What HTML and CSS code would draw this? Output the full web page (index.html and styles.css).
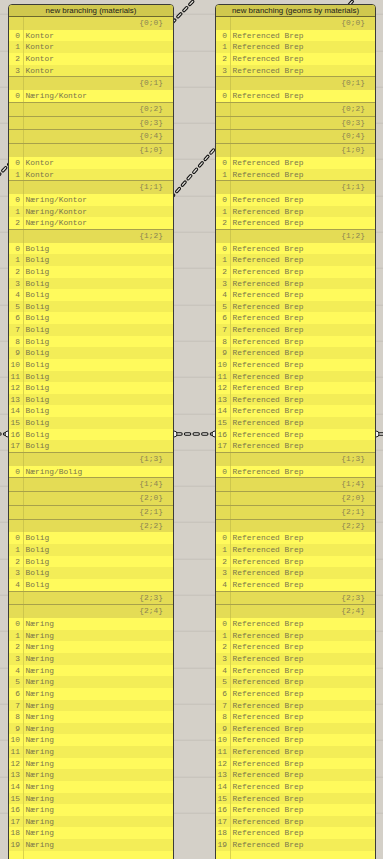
FILE: index.html
```html
<!DOCTYPE html>
<html>
<head>
<meta charset="utf-8">
<link rel="stylesheet" href="styles.css">
</head>
<body>
<div class="canvas">
  <svg class="wires" width="383" height="859" viewBox="0 0 383 859">
    <g class="wire">
      <path d="M172 23 L197 -3"/>
      <path d="M344 11 L356 -3"/>
      <path d="M-3 177 L12 161"/>
      <path d="M171 198 L218 145"/>
      <path d="M-4 434 L5 434"/>
      <path d="M177 434 L212 434"/>
      <path d="M379 434 L388 434"/>
    </g>
    <g class="wire-in">
      <path d="M172 23 L197 -3"/>
      <path d="M344 11 L356 -3"/>
      <path d="M-3 177 L12 161"/>
      <path d="M171 198 L218 145"/>
      <path d="M-4 434 L5 434"/>
      <path d="M177 434 L212 434"/>
      <path d="M379 434 L388 434"/>
    </g>
    <g class="grip">
      <circle cx="8" cy="434" r="3"/>
      <circle cx="174" cy="434" r="3"/>
      <circle cx="215" cy="434" r="3"/>
      <circle cx="376" cy="434" r="3"/>
    </g>
  </svg>

  <div class="panel panel-left">
    <div class="title">new branching (materials)</div>
    <div class="body">
      <div class="branch">
        <div class="path first"><span class="i"></span><span class="v">{0;0}</span></div>
        <div class="row"><span class="i">0</span><span class="v">Kontor</span></div>
        <div class="row"><span class="i">1</span><span class="v">Kontor</span></div>
        <div class="row"><span class="i">2</span><span class="v">Kontor</span></div>
        <div class="row"><span class="i">3</span><span class="v">Kontor</span></div>
      </div>
      <div class="branch">
        <div class="path"><span class="i"></span><span class="v">{0;1}</span></div>
        <div class="row"><span class="i">0</span><span class="v">Næring/Kontor</span></div>
      </div>
      <div class="branch"><div class="path"><span class="i"></span><span class="v">{0;2}</span></div></div>
      <div class="branch"><div class="path"><span class="i"></span><span class="v">{0;3}</span></div></div>
      <div class="branch"><div class="path"><span class="i"></span><span class="v">{0;4}</span></div></div>
      <div class="branch">
        <div class="path"><span class="i"></span><span class="v">{1;0}</span></div>
        <div class="row"><span class="i">0</span><span class="v">Kontor</span></div>
        <div class="row"><span class="i">1</span><span class="v">Kontor</span></div>
      </div>
      <div class="branch">
        <div class="path"><span class="i"></span><span class="v">{1;1}</span></div>
        <div class="row"><span class="i">0</span><span class="v">Næring/Kontor</span></div>
        <div class="row"><span class="i">1</span><span class="v">Næring/Kontor</span></div>
        <div class="row"><span class="i">2</span><span class="v">Næring/Kontor</span></div>
      </div>
      <div class="branch">
        <div class="path"><span class="i"></span><span class="v">{1;2}</span></div>
        <div class="row"><span class="i">0</span><span class="v">Bolig</span></div>
        <div class="row"><span class="i">1</span><span class="v">Bolig</span></div>
        <div class="row"><span class="i">2</span><span class="v">Bolig</span></div>
        <div class="row"><span class="i">3</span><span class="v">Bolig</span></div>
        <div class="row"><span class="i">4</span><span class="v">Bolig</span></div>
        <div class="row"><span class="i">5</span><span class="v">Bolig</span></div>
        <div class="row"><span class="i">6</span><span class="v">Bolig</span></div>
        <div class="row"><span class="i">7</span><span class="v">Bolig</span></div>
        <div class="row"><span class="i">8</span><span class="v">Bolig</span></div>
        <div class="row"><span class="i">9</span><span class="v">Bolig</span></div>
        <div class="row"><span class="i">10</span><span class="v">Bolig</span></div>
        <div class="row"><span class="i">11</span><span class="v">Bolig</span></div>
        <div class="row"><span class="i">12</span><span class="v">Bolig</span></div>
        <div class="row"><span class="i">13</span><span class="v">Bolig</span></div>
        <div class="row"><span class="i">14</span><span class="v">Bolig</span></div>
        <div class="row"><span class="i">15</span><span class="v">Bolig</span></div>
        <div class="row"><span class="i">16</span><span class="v">Bolig</span></div>
        <div class="row"><span class="i">17</span><span class="v">Bolig</span></div>
      </div>
      <div class="branch">
        <div class="path"><span class="i"></span><span class="v">{1;3}</span></div>
        <div class="row"><span class="i">0</span><span class="v">Næring/Bolig</span></div>
      </div>
      <div class="branch"><div class="path"><span class="i"></span><span class="v">{1;4}</span></div></div>
      <div class="branch"><div class="path"><span class="i"></span><span class="v">{2;0}</span></div></div>
      <div class="branch"><div class="path"><span class="i"></span><span class="v">{2;1}</span></div></div>
      <div class="branch">
        <div class="path"><span class="i"></span><span class="v">{2;2}</span></div>
        <div class="row"><span class="i">0</span><span class="v">Bolig</span></div>
        <div class="row"><span class="i">1</span><span class="v">Bolig</span></div>
        <div class="row"><span class="i">2</span><span class="v">Bolig</span></div>
        <div class="row"><span class="i">3</span><span class="v">Bolig</span></div>
        <div class="row"><span class="i">4</span><span class="v">Bolig</span></div>
      </div>
      <div class="branch"><div class="path"><span class="i"></span><span class="v">{2;3}</span></div></div>
      <div class="branch">
        <div class="path"><span class="i"></span><span class="v">{2;4}</span></div>
        <div class="row"><span class="i">0</span><span class="v">Næring</span></div>
        <div class="row"><span class="i">1</span><span class="v">Næring</span></div>
        <div class="row"><span class="i">2</span><span class="v">Næring</span></div>
        <div class="row"><span class="i">3</span><span class="v">Næring</span></div>
        <div class="row"><span class="i">4</span><span class="v">Næring</span></div>
        <div class="row"><span class="i">5</span><span class="v">Næring</span></div>
        <div class="row"><span class="i">6</span><span class="v">Næring</span></div>
        <div class="row"><span class="i">7</span><span class="v">Næring</span></div>
        <div class="row"><span class="i">8</span><span class="v">Næring</span></div>
        <div class="row"><span class="i">9</span><span class="v">Næring</span></div>
        <div class="row"><span class="i">10</span><span class="v">Næring</span></div>
        <div class="row"><span class="i">11</span><span class="v">Næring</span></div>
        <div class="row"><span class="i">12</span><span class="v">Næring</span></div>
        <div class="row"><span class="i">13</span><span class="v">Næring</span></div>
        <div class="row"><span class="i">14</span><span class="v">Næring</span></div>
        <div class="row"><span class="i">15</span><span class="v">Næring</span></div>
        <div class="row"><span class="i">16</span><span class="v">Næring</span></div>
        <div class="row"><span class="i">17</span><span class="v">Næring</span></div>
        <div class="row"><span class="i">18</span><span class="v">Næring</span></div>
        <div class="row"><span class="i">19</span><span class="v">Næring</span></div>
      </div>
    </div>
  </div>

  <div class="panel panel-right">
    <div class="title">new branching (geoms by materials)</div>
    <div class="body">
      <div class="branch">
        <div class="path first"><span class="i"></span><span class="v">{0;0}</span></div>
        <div class="row"><span class="i">0</span><span class="v">Referenced Brep</span></div>
        <div class="row"><span class="i">1</span><span class="v">Referenced Brep</span></div>
        <div class="row"><span class="i">2</span><span class="v">Referenced Brep</span></div>
        <div class="row"><span class="i">3</span><span class="v">Referenced Brep</span></div>
      </div>
      <div class="branch">
        <div class="path"><span class="i"></span><span class="v">{0;1}</span></div>
        <div class="row"><span class="i">0</span><span class="v">Referenced Brep</span></div>
      </div>
      <div class="branch"><div class="path"><span class="i"></span><span class="v">{0;2}</span></div></div>
      <div class="branch"><div class="path"><span class="i"></span><span class="v">{0;3}</span></div></div>
      <div class="branch"><div class="path"><span class="i"></span><span class="v">{0;4}</span></div></div>
      <div class="branch">
        <div class="path"><span class="i"></span><span class="v">{1;0}</span></div>
        <div class="row"><span class="i">0</span><span class="v">Referenced Brep</span></div>
        <div class="row"><span class="i">1</span><span class="v">Referenced Brep</span></div>
      </div>
      <div class="branch">
        <div class="path"><span class="i"></span><span class="v">{1;1}</span></div>
        <div class="row"><span class="i">0</span><span class="v">Referenced Brep</span></div>
        <div class="row"><span class="i">1</span><span class="v">Referenced Brep</span></div>
        <div class="row"><span class="i">2</span><span class="v">Referenced Brep</span></div>
      </div>
      <div class="branch">
        <div class="path"><span class="i"></span><span class="v">{1;2}</span></div>
        <div class="row"><span class="i">0</span><span class="v">Referenced Brep</span></div>
        <div class="row"><span class="i">1</span><span class="v">Referenced Brep</span></div>
        <div class="row"><span class="i">2</span><span class="v">Referenced Brep</span></div>
        <div class="row"><span class="i">3</span><span class="v">Referenced Brep</span></div>
        <div class="row"><span class="i">4</span><span class="v">Referenced Brep</span></div>
        <div class="row"><span class="i">5</span><span class="v">Referenced Brep</span></div>
        <div class="row"><span class="i">6</span><span class="v">Referenced Brep</span></div>
        <div class="row"><span class="i">7</span><span class="v">Referenced Brep</span></div>
        <div class="row"><span class="i">8</span><span class="v">Referenced Brep</span></div>
        <div class="row"><span class="i">9</span><span class="v">Referenced Brep</span></div>
        <div class="row"><span class="i">10</span><span class="v">Referenced Brep</span></div>
        <div class="row"><span class="i">11</span><span class="v">Referenced Brep</span></div>
        <div class="row"><span class="i">12</span><span class="v">Referenced Brep</span></div>
        <div class="row"><span class="i">13</span><span class="v">Referenced Brep</span></div>
        <div class="row"><span class="i">14</span><span class="v">Referenced Brep</span></div>
        <div class="row"><span class="i">15</span><span class="v">Referenced Brep</span></div>
        <div class="row"><span class="i">16</span><span class="v">Referenced Brep</span></div>
        <div class="row"><span class="i">17</span><span class="v">Referenced Brep</span></div>
      </div>
      <div class="branch">
        <div class="path"><span class="i"></span><span class="v">{1;3}</span></div>
        <div class="row"><span class="i">0</span><span class="v">Referenced Brep</span></div>
      </div>
      <div class="branch"><div class="path"><span class="i"></span><span class="v">{1;4}</span></div></div>
      <div class="branch"><div class="path"><span class="i"></span><span class="v">{2;0}</span></div></div>
      <div class="branch"><div class="path"><span class="i"></span><span class="v">{2;1}</span></div></div>
      <div class="branch">
        <div class="path"><span class="i"></span><span class="v">{2;2}</span></div>
        <div class="row"><span class="i">0</span><span class="v">Referenced Brep</span></div>
        <div class="row"><span class="i">1</span><span class="v">Referenced Brep</span></div>
        <div class="row"><span class="i">2</span><span class="v">Referenced Brep</span></div>
        <div class="row"><span class="i">3</span><span class="v">Referenced Brep</span></div>
        <div class="row"><span class="i">4</span><span class="v">Referenced Brep</span></div>
      </div>
      <div class="branch"><div class="path"><span class="i"></span><span class="v">{2;3}</span></div></div>
      <div class="branch">
        <div class="path"><span class="i"></span><span class="v">{2;4}</span></div>
        <div class="row"><span class="i">0</span><span class="v">Referenced Brep</span></div>
        <div class="row"><span class="i">1</span><span class="v">Referenced Brep</span></div>
        <div class="row"><span class="i">2</span><span class="v">Referenced Brep</span></div>
        <div class="row"><span class="i">3</span><span class="v">Referenced Brep</span></div>
        <div class="row"><span class="i">4</span><span class="v">Referenced Brep</span></div>
        <div class="row"><span class="i">5</span><span class="v">Referenced Brep</span></div>
        <div class="row"><span class="i">6</span><span class="v">Referenced Brep</span></div>
        <div class="row"><span class="i">7</span><span class="v">Referenced Brep</span></div>
        <div class="row"><span class="i">8</span><span class="v">Referenced Brep</span></div>
        <div class="row"><span class="i">9</span><span class="v">Referenced Brep</span></div>
        <div class="row"><span class="i">10</span><span class="v">Referenced Brep</span></div>
        <div class="row"><span class="i">11</span><span class="v">Referenced Brep</span></div>
        <div class="row"><span class="i">12</span><span class="v">Referenced Brep</span></div>
        <div class="row"><span class="i">13</span><span class="v">Referenced Brep</span></div>
        <div class="row"><span class="i">14</span><span class="v">Referenced Brep</span></div>
        <div class="row"><span class="i">15</span><span class="v">Referenced Brep</span></div>
        <div class="row"><span class="i">16</span><span class="v">Referenced Brep</span></div>
        <div class="row"><span class="i">17</span><span class="v">Referenced Brep</span></div>
        <div class="row"><span class="i">18</span><span class="v">Referenced Brep</span></div>
        <div class="row"><span class="i">19</span><span class="v">Referenced Brep</span></div>
      </div>
    </div>
  </div>
</div>
</body>
</html>
```
FILE: styles.css
```css
html, body {
  margin: 0;
  padding: 0;
  width: 383px;
  height: 859px;
  overflow: hidden;
  background: #d4d0c8;
}

.canvas {
  position: relative;
  box-sizing: border-box;
  width: 383px;
  height: 859px;
  overflow: hidden;
  display: flex;
  align-items: flex-start;
  gap: 41px;
  padding: 4px 0 0 8px;
  background-color: #d4d0c8;
  background-image: repeating-linear-gradient(to bottom,
    transparent 0, transparent 35.3px,
    #c4c0b9 35.3px, #c4c0b9 36.3px);
  background-position: 0 -21.3px;
}

.wires {
  position: absolute;
  left: 0;
  top: 0;
  z-index: 0;
}

.wire path {
  fill: none;
  stroke: #111;
  stroke-width: 3.4;
  stroke-linecap: round;
  stroke-dasharray: 4 4.6;
}

.wire-in path {
  fill: none;
  stroke: #e2e0da;
  stroke-width: 1.3;
  stroke-linecap: round;
  stroke-dasharray: 4 4.6;
}

.grip circle {
  fill: #f2f2f0;
  stroke: #222;
  stroke-width: 1;
}

.panel {
  position: relative;
  z-index: 1;
  box-sizing: border-box;
  height: 900px;
  display: flex;
  flex-direction: column;
  border: 1px solid #3c3c38;
  border-radius: 4px 4px 0 0;
  overflow: hidden;
  background: #fffa5c;
}

.panel-left { width: 166px; }
.panel-right { width: 161px; }

.title {
  height: 11px;
  line-height: 11px;
  background: #d0c84e;
  color: #1c1c1a;
  font-family: "Liberation Sans", Arial, sans-serif;
  font-size: 7.9px;
  text-align: center;
  white-space: nowrap;
}

.body {
  flex: 1;
  background-color: #fffa5c;
  background-image: linear-gradient(to right,
    transparent 14px, #d9d24e 14px, #d9d24e 15px, transparent 15px);
}

.path,
.row {
  display: grid;
  grid-template-columns: 14px 1fr;
  font-family: "Liberation Mono", "Courier New", monospace;
  font-size: 7.9px;
  white-space: nowrap;
}

.path {
  box-sizing: border-box;
  height: 13.8px;
  line-height: 12px;
  border-top: 1px solid #a8a14a;
  background: #e4dc55;
  color: #8a8452;
}

.path.first {
  border-top-color: #6c672e;
}

.path .v {
  text-align: right;
  padding-right: 10px;
  border-left: 1px solid #cdc64c;
}

.row {
  height: 11.63px;
  line-height: 11.63px;
  background: #fffa5c;
  color: #7a764c;
}

.row:nth-child(odd) {
  background: #f3ed57;
}

.row .i {
  text-align: right;
  padding-right: 3px;
}

.row .v {
  padding-left: 1.5px;
  border-left: 1px solid #d9d24e;
}
```
